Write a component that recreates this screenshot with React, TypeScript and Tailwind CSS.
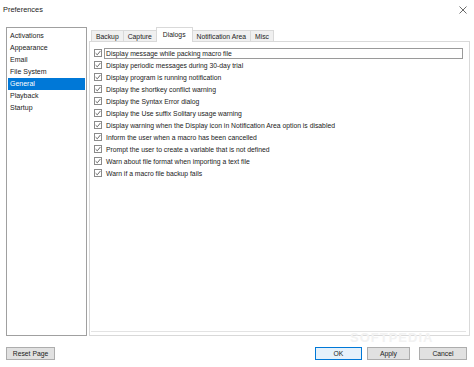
import { useState } from 'react';

const pages = ['Activations', 'Appearance', 'Email', 'File System', 'General', 'Playback', 'Startup'];
const tabs = ['Backup', 'Capture', 'Dialogs', 'Notification Area', 'Misc'];
const options = [
  'Display message while packing macro file',
  'Display periodic messages during 30-day trial',
  'Display program is running notification',
  'Display the shortkey conflict warning',
  'Display the Syntax Error dialog',
  'Display the Use suffix Solitary usage warning',
  'Display warning when the Display icon in Notification Area option is disabled',
  'Inform the user when a macro has been cancelled',
  'Prompt the user to create a variable that is not defined',
  'Warn about file format when importing a text file',
  'Warn if a macro file backup fails',
];

function Check() {
  return (
    <span className="w-[8px] h-[8px] border border-[#8a8a8a] bg-white flex items-center justify-center shrink-0">
      <svg width="6" height="6" viewBox="0 0 6 6">
        <path d="M0.6 3.2 L2.3 4.8 L5.4 1" stroke="#444" strokeWidth="0.8" fill="none" />
      </svg>
    </span>
  );
}

export default function App() {
  const [page, setPage] = useState('General');
  const [tab, setTab] = useState('Dialogs');

  return (
    <div className="w-[474px] h-[367px] bg-white text-[6.8px] leading-[12px] text-[#222] relative overflow-hidden" style={{ fontFamily: '"Liberation Sans", Arial, sans-serif' }}>
      {/* title bar */}
      <div className="h-[20px] flex items-center justify-between pl-[3px] pr-[7px]">
        <span className="text-[7.4px] text-[#222]">Preferences</span>
        <svg width="8" height="8" viewBox="0 0 8 8">
          <path d="M0.5 0.5 L7.5 7.5 M7.5 0.5 L0.5 7.5" stroke="#444" strokeWidth="0.8" />
        </svg>
      </div>

      <div className="flex mt-[7px] ml-[6px] h-[309px]">
        {/* page list */}
        <div className="w-[81px] h-[309px] border border-[#a0a0a0] pt-[2px] px-px text-[7px]">
          {pages.map(p => (
            <div
              key={p}
              onClick={() => setPage(p)}
              className={`h-[12px] pl-[2px] ${page === p ? 'bg-[#0078d7] text-white' : ''}`}
            >
              {p}
            </div>
          ))}
        </div>

        {/* tab area */}
        <div className="ml-[2px] w-[381px] flex flex-col">
          <div className="flex items-end h-[14px] pl-[3px]">
            {tabs.map(t => (
              <div
                key={t}
                onClick={() => setTab(t)}
                className={`border border-b-0 border-[#d9d9d9] -ml-px ${
                  tab === t ? 'bg-white h-[15px] pt-[1px] px-[6px] relative z-10 -mb-px' : 'bg-[#f0f0f0] h-[11px] leading-[11px] px-[4px]'
                }`}
              >
                {t}
              </div>
            ))}
          </div>
          <div className="flex-1 border border-[#d9d9d9] bg-white pt-[5px] pl-[4px] pr-[6px] flex flex-col">
            {options.map((o, i) => (
              <div key={o} className="h-[12px] flex items-center gap-[2px]">
                <Check />
                <span className={`flex-1 h-[11px] leading-[10px] pl-px ${i === 0 ? 'border border-[#9a9a9a]' : 'border border-transparent'}`}>{o}</span>
              </div>
            ))}
            <div className="flex-1" />
            <div className="border-b border-[#e3e3e3] -mx-[3px] mb-[3px]" />
          </div>
        </div>
      </div>

      {/* buttons */}
      <div className="flex items-center mt-[11px] pl-[6px] pr-[7px]">
        <button className="w-[49px] h-[13px] bg-[#e1e1e1] border border-[#adadad] leading-[11px]">Reset Page</button>
        <div className="flex-1" />
        <button className="w-[47px] h-[13px] bg-[#e5f1fb] border border-[#0078d7] leading-[11px]">OK</button>
        <button className="w-[43px] h-[13px] bg-[#e1e1e1] border border-[#adadad] leading-[11px] ml-[5px]">Apply</button>
        <button className="w-[48px] h-[13px] bg-[#e1e1e1] border border-[#adadad] leading-[11px] ml-[9px]">Cancel</button>
      </div>

      <div className="absolute left-[350px] top-[331px] text-[13px] font-bold tracking-[1px] text-[#f2f2f2] leading-[14px]">SOFTPEDIA</div>
    </div>
  );
}
